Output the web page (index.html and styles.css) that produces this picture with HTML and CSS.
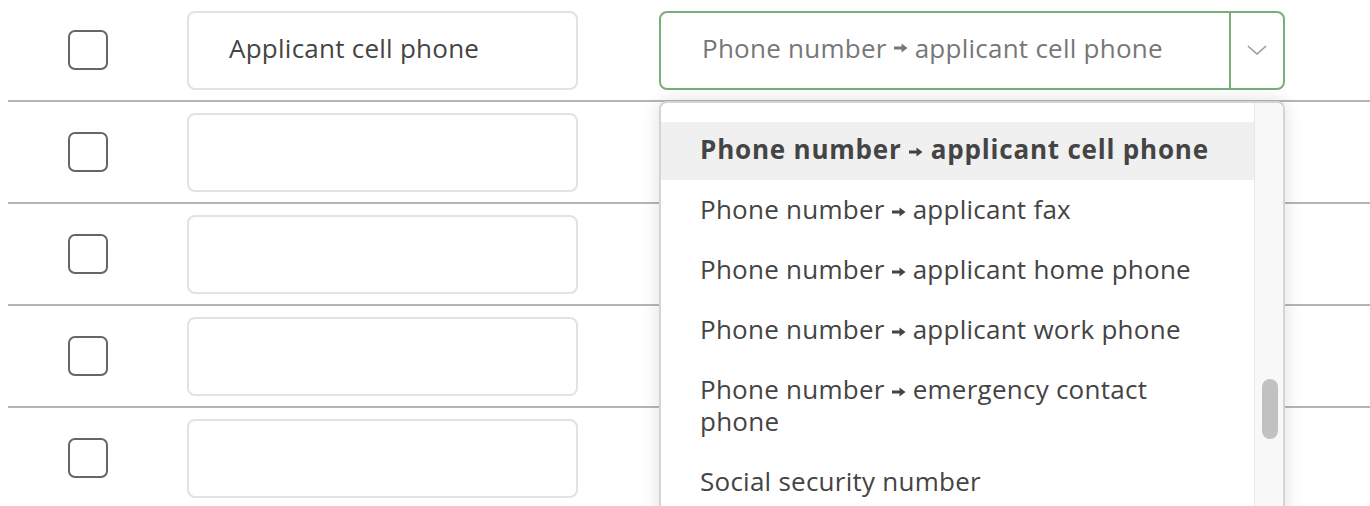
FILE: index.html
```html
<!DOCTYPE html>
<html>
<head>
<meta charset="utf-8">
<link rel="stylesheet" href="styles.css">
</head>
<body>
<div class="table">
  <div class="row">
    <span class="check"></span>
    <div class="field">Applicant cell phone</div>
    <div class="select-wrap">
      <div class="select">
        <div class="select-value">Phone number <svg class="arrow" viewBox="0 0 14 10"><path d="M0 3.5h7.5V0.5L13.5 5L7.5 9.5V6.5H0z"/></svg> applicant cell phone</div>
        <div class="select-toggle"><svg class="chev" viewBox="0 0 22 12"><path d="M1 1l10 9 10-9"/></svg></div>
      </div>
      <div class="menu">
        <ul class="options">
          <li class="option active">Phone number <svg class="arrow" viewBox="0 0 14 10"><path d="M0 3.5h7.5V0.5L13.5 5L7.5 9.5V6.5H0z"/></svg> applicant cell phone</li>
          <li class="option">Phone number <svg class="arrow" viewBox="0 0 14 10"><path d="M0 3.5h7.5V0.5L13.5 5L7.5 9.5V6.5H0z"/></svg> applicant fax</li>
          <li class="option">Phone number <svg class="arrow" viewBox="0 0 14 10"><path d="M0 3.5h7.5V0.5L13.5 5L7.5 9.5V6.5H0z"/></svg> applicant home phone</li>
          <li class="option">Phone number <svg class="arrow" viewBox="0 0 14 10"><path d="M0 3.5h7.5V0.5L13.5 5L7.5 9.5V6.5H0z"/></svg> applicant work phone</li>
          <li class="option">Phone number <svg class="arrow" viewBox="0 0 14 10"><path d="M0 3.5h7.5V0.5L13.5 5L7.5 9.5V6.5H0z"/></svg> emergency contact phone</li>
          <li class="option">Social security number</li>
        </ul>
        <div class="track"><span class="thumb"></span></div>
      </div>
    </div>
  </div>
  <div class="row">
    <span class="check"></span>
    <div class="field"></div>
  </div>
  <div class="row">
    <span class="check"></span>
    <div class="field"></div>
  </div>
  <div class="row">
    <span class="check"></span>
    <div class="field"></div>
  </div>
  <div class="row">
    <span class="check"></span>
    <div class="field"></div>
  </div>
</div>
</body>
</html>
```
FILE: styles.css
```css
html, body {
  margin: 0;
  padding: 0;
  background: #fff;
  overflow: hidden;
  height: 506px;
}
body {
  font-family: "Open Sans", "Liberation Sans", sans-serif;
  font-size: 26px;
  letter-spacing: 0.25px;
  color: #444;
}
.table {
  padding-left: 8px;
}
.row {
  display: flex;
  align-items: center;
  height: 100px;
  border-bottom: 2px solid #b5b5b5;
}
.check {
  flex: none;
  width: 36px;
  height: 36px;
  margin-left: 60px;
  border: 2px solid #666;
  border-radius: 7px;
  box-sizing: content-box;
}
.field {
  flex: none;
  box-sizing: border-box;
  width: 391px;
  height: 79px;
  margin-left: 79px;
  border: 2px solid #e2e2e2;
  border-radius: 8px;
  padding-left: 40px;
  padding-bottom: 4px;
  display: flex;
  align-items: center;
  color: #444;
}
.select-wrap {
  position: relative;
  margin-left: 81px;
  z-index: 2;
}
.select {
  box-sizing: border-box;
  width: 626px;
  height: 79px;
  border: 2px solid #7aae77;
  border-radius: 8px;
  display: flex;
  align-items: stretch;
}
.select-value {
  flex: 1;
  display: flex;
  align-items: center;
  padding-left: 41px;
  padding-bottom: 4px;
  color: #777;
  white-space: pre;
}
.select-toggle {
  width: 52px;
  border-left: 2px solid #7aae77;
  display: flex;
  align-items: center;
  justify-content: center;
}
.chev {
  width: 20px;
  height: 11px;
  fill: none;
  stroke: #999;
  stroke-width: 1.6;
}
.arrow {
  width: 14px;
  height: 10px;
  fill: currentColor;
  vertical-align: 2px;
}
.menu {
  position: absolute;
  top: 90px;
  left: 0;
  width: 626px;
  height: 420px;
  box-sizing: border-box;
  border: 2px solid #d4d4d4;
  border-bottom: none;
  border-radius: 8px 8px 0 0;
  background: #fff;
  box-shadow: 0 0 18px rgba(0, 0, 0, 0.13);
  display: flex;
  overflow: hidden;
}
.options {
  list-style: none;
  margin: 0;
  padding: 19px 0 0;
  flex: 1;
}
.option {
  padding: 11px 40px 15px 39px;
  line-height: 32px;
  margin-bottom: 2px;
  color: #444;
}
.option.active {
  background: #f0f0f0;
  font-weight: 700;
  letter-spacing: 0.8px;
}
.track {
  position: relative;
  width: 28px;
  flex: none;
  background: #f8f8f8;
  border-left: 1px solid #e8e8e8;
}
.thumb {
  position: absolute;
  top: 276px;
  left: 7px;
  width: 16px;
  height: 60px;
  border-radius: 8px;
  background: #c1c1c1;
}
```
